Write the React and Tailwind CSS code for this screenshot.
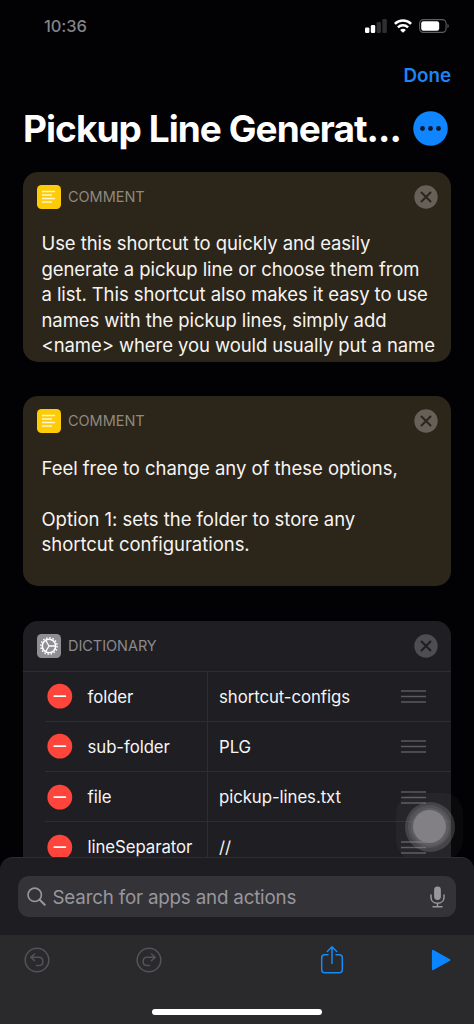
const actions = [
  {
    id: 1,
    lines: [
      "Use this shortcut to quickly and easily",
      "generate a pickup line or choose them from",
      "a list. This shortcut also makes it easy to use",
      "names with the pickup lines, simply add",
      "<name> where you would usually put a name",
    ],
    tracking: "tracking-[-0.08px]",
  },
  {
    id: 2,
    lines: [
      "Feel free to change any of these options,",
      "",
      "Option 1: sets the folder to store any",
      "shortcut configurations.",
    ],
    tracking: "tracking-[-0.03px]",
  },
];

const entries = [
  { key: "folder", value: "shortcut-configs" },
  { key: "sub-folder", value: "PLG" },
  { key: "file", value: "pickup-lines.txt" },
  { key: "lineSeparator", value: "//" },
];

function StatusBar() {
  return (
    <div className="flex h-[52px] items-center justify-between pl-11 pr-6">
      <span className="text-[16.5px] font-medium tracking-[-0.1px] text-[#858387]">10:36</span>
      <div className="flex items-center gap-[7px]">
        <svg width="22" height="14" viewBox="0 0 22 14">
          <rect x="0" y="8.5" width="4.4" height="5.5" rx="1.2" fill="#fff" />
          <rect x="5.8" y="6" width="4.4" height="8" rx="1.2" fill="#fff" />
          <rect x="11.6" y="3" width="4.4" height="11" rx="1.2" fill="#2f2e31" />
          <rect x="17.4" y="0" width="4.4" height="14" rx="1.2" fill="#2f2e31" />
        </svg>
        <svg width="18" height="14" viewBox="0 0 18 14" fill="none" stroke="#fff" strokeWidth="2.5">
          <path d="M.9 4.9C5.4.4 12.6.4 17.1 4.9" />
          <path d="M3.9 8.3c2.9-2.8 7.3-2.8 10.2 0" />
          <path d="M9 13.8 6.1 10.9c1.6-1.4 4.2-1.4 5.8 0z" fill="#fff" stroke="none" />
        </svg>
        <svg width="31" height="14" viewBox="0 0 31 14">
          <rect x="0.6" y="0.6" width="26.5" height="12.8" rx="3.8" fill="none" stroke="#5f5e61" strokeWidth="1.1" />
          <rect x="2.2" y="2.2" width="18" height="9.6" rx="2.2" fill="#fff" />
          <path d="M28.5 4.8c1.7.7 1.7 3.7 0 4.4z" fill="#5f5e61" />
        </svg>
      </div>
    </div>
  );
}

function CommentIcon() {
  return (
    <svg width="24" height="24" viewBox="0 0 24 24">
      <rect width="24" height="24" rx="4.5" fill="#fecb08" />
      <path
        d="M5.5 6.5h12M5.5 10h9M5.5 13.5h12M5.5 17h9"
        stroke="#fff6cf"
        strokeWidth="1.4"
        strokeLinecap="round"
      />
    </svg>
  );
}

function GearIcon() {
  return (
    <svg width="24" height="24" viewBox="0 0 24 24" fill="none" stroke="#fff">
      <rect width="24" height="24" rx="4.5" fill="#8e8e93" stroke="none" />
      <circle cx="12" cy="12" r="8.2" strokeWidth="1.5" strokeDasharray="1.5 1.72" />
      <circle cx="12" cy="12" r="6.7" strokeWidth="1.6" />
      <path d="M12 12h6.5M12 12 8.7 6.3M12 12l-3.3 5.7" strokeWidth="1.3" />
    </svg>
  );
}

function CardHeader({ icon, title, dark }) {
  return (
    <div className="flex h-[50px] shrink-0 items-center pl-[13.5px] pr-[13px]">
      {icon}
      <span
        className={
          dark
            ? "ml-[7.5px] flex-1 text-[14.5px] tracking-[-0.04px] text-[#8b8a8f]"
            : "ml-[7.5px] flex-1 text-[14.5px] tracking-[-0.04px] text-[#8f897f]"
        }
      >
        {title}
      </span>
      <svg width="24" height="24" viewBox="0 0 24 24">
        <circle cx="12" cy="12" r="11.7" fill={dark ? "#4e4d51" : "#676058"} />
        <path
          d="m7.5 7.5 9 9m0-9-9 9"
          stroke={dark ? "#1f1e22" : "#2c251a"}
          strokeWidth="2"
          strokeLinecap="round"
        />
      </svg>
    </div>
  );
}

function CommentCard({ lines, tracking }) {
  return (
    <section className="flex h-[190px] flex-col overflow-hidden rounded-[15px] bg-[#2c251a]">
      <CardHeader icon={<CommentIcon />} title="COMMENT" />
      <div className={`pl-[18.5px] pt-[9.5px] text-[18.5px] leading-[25.5px] text-[#f6f4f1] ${tracking}`}>
        {lines.map((line, i) => (
          <p key={i} className="h-[25.5px] whitespace-nowrap">
            {line}
          </p>
        ))}
      </div>
    </section>
  );
}

function DictionaryCard() {
  return (
    <section className="overflow-hidden rounded-t-[15px] bg-[#1f1e22]">
      <CardHeader icon={<GearIcon />} title="DICTIONARY" dark />
      {entries.map((entry, i) => (
        <div key={entry.key} className="flex h-[50.25px]">
          <div className={i === 0 ? "w-[22px] border-t border-[#2e2d31]" : "w-[22px]"} />
          <div className="flex flex-1 items-center border-t border-[#2e2d31] text-[16.8px] tracking-[-0.07px] text-[#f5f5f7]">
            <svg className="ml-0.5 shrink-0" width="26" height="26" viewBox="0 0 26 26">
              <circle cx="12.8" cy="13.2" r="12.4" fill="#fd453b" />
              <path d="M7.3 13.2h11" stroke="#fff" strokeWidth="1.8" strokeLinecap="round" />
            </svg>
            <span className="ml-[14.5px] w-[119.5px] whitespace-nowrap pt-0.5">{entry.key}</span>
            <div className="flex h-full flex-1 items-center border-l border-[#2e2d31] pl-[11px] pt-0.5">{entry.value}</div>
            <svg className="mr-[25px]" width="25" height="14" viewBox="0 0 25 14">
              <path d="M0 2h25M0 7.5h25M0 13h25" stroke="#5b5a5e" strokeWidth="1.5" />
            </svg>
          </div>
        </div>
      ))}
    </section>
  );
}

function SearchSheet() {
  return (
    <div className="relative z-10 -mt-[13px] h-[78px] rounded-t-[13px] border-t border-[#2e2d31] bg-[#1e1d21] px-[18px] pt-[18px]">
      <div className="flex h-[41px] items-center rounded-[11px] bg-[#343338] pl-[9px] pr-[11px] text-[#98979d]">
        <svg width="19" height="20" viewBox="0 0 19 20" fill="none" stroke="currentColor" strokeLinecap="round">
          <circle cx="7.7" cy="7.8" r="6.7" strokeWidth="1.6" />
          <path d="m12.7 12.8 5 5" strokeWidth="2" />
        </svg>
        <span className="ml-[6.5px] flex-1 pt-[3px] text-[18.8px] tracking-[-0.2px]">Search for apps and actions</span>
        <svg width="15" height="22" viewBox="0 0 15 22" fill="none" stroke="currentColor" strokeWidth="1.5" strokeLinecap="round">
          <rect x="4.1" y="0.5" width="6.8" height="13.5" rx="3.4" fill="currentColor" stroke="none" />
          <path d="M1 9v2.2c0 3.6 2.6 6 6.5 6s6.5-2.4 6.5-6V9M7.5 17.5v3M3 20.7h9" />
        </svg>
      </div>
    </div>
  );
}

function Toolbar() {
  return (
    <div className="flex h-[89px] flex-col items-center bg-[#2a292c]">
      <div className="flex h-[50px] w-full items-center pl-6 pr-[23px]">
        <svg width="26" height="26" viewBox="0 0 26 26" fill="none" stroke="#545357" strokeWidth="1.5" strokeLinecap="round" strokeLinejoin="round">
          <circle cx="13" cy="13" r="11.8" />
          <path d="m10.5 7-3.7 3.3 3.7 3.3M7 10.3h7.8c5.4 0 5.4 8.2 0 8.2h-2.3" />
        </svg>
        <svg className="ml-[85.5px]" width="26" height="26" viewBox="0 0 26 26" fill="none" stroke="#545357" strokeWidth="1.5" strokeLinecap="round" strokeLinejoin="round">
          <circle cx="13" cy="13" r="11.8" />
          <path d="m15.5 7 3.7 3.3-3.7 3.3M19 10.3h-7.8c-5.4 0-5.4 8.2 0 8.2h2.3" />
        </svg>
        <svg className="ml-auto" width="24" height="30" viewBox="0 0 24 30" fill="none" stroke="#168af5" strokeWidth="1.5" strokeLinecap="round" strokeLinejoin="round">
          <path d="M8 9.7H4.7a3 3 0 0 0-3 3v12a3 3 0 0 0 3 3h14.6a3 3 0 0 0 3-3v-12a3 3 0 0 0-3-3H16M12 18.5V1.8M7.3 6.5 12 1.8 16.7 6.5" />
        </svg>
        <svg className="ml-[87px]" width="20" height="22" viewBox="0 0 20 22">
          <path d="M1.9 1.8v18.4L18.5 11z" fill="#0a84ff" stroke="#0a84ff" strokeWidth="2" strokeLinejoin="round" />
        </svg>
      </div>
      <div className="mt-[24px] h-[6px] w-[170px] rounded-full bg-white" />
    </div>
  );
}

export default function App() {
  return (
    <div className="relative h-[1024px] w-[474px] overflow-hidden bg-[#020104] font-['Inter',sans-serif] text-white">
      <main className="h-[870px] overflow-hidden">
        <StatusBar />
        <div className="flex h-12 items-center justify-end pr-[23px]">
          <button className="text-[18.8px] font-semibold text-[#1c86f2]">Done</button>
        </div>
        <header className="flex h-[71.5px] items-start justify-between pl-[23px] pr-[26px] pt-[5px]">
          <h1 className="whitespace-nowrap text-[37px] font-bold leading-[48px] tracking-[-0.95px]">Pickup Line Generat...</h1>
          <svg className="mt-[6px]" width="35" height="35" viewBox="0 0 35 35">
            <circle cx="17.5" cy="17.5" r="17.3" fill="#0f85ff" />
            <circle cx="9.5" cy="17.5" r="2.4" fill="#061c38" />
            <circle cx="17.5" cy="17.5" r="2.4" fill="#061c38" />
            <circle cx="25.5" cy="17.5" r="2.4" fill="#061c38" />
          </svg>
        </header>
        <div className="flex flex-col gap-[34.5px] px-[23px]">
          {actions.map((action) => (
            <CommentCard key={action.id} lines={action.lines} tracking={action.tracking} />
          ))}
          <DictionaryCard />
        </div>
      </main>

      {/* AssistiveTouch button */}
      <div className="absolute left-[396px] top-[793px] flex size-[67px] items-center justify-center rounded-[20px] bg-white/[0.03]">
        <div className="flex size-[50px] items-center justify-center rounded-full bg-[#8e8d91]/30">
          <div className="flex size-[43px] items-center justify-center rounded-full bg-[#8e8d91]/20">
            <div className="flex size-[38px] items-center justify-center rounded-full bg-[#8e8d91]/20">
              <div className="size-[33px] rounded-full bg-[#828085]" />
            </div>
          </div>
        </div>
      </div>

      <SearchSheet />
      <Toolbar />
    </div>
  );
}
